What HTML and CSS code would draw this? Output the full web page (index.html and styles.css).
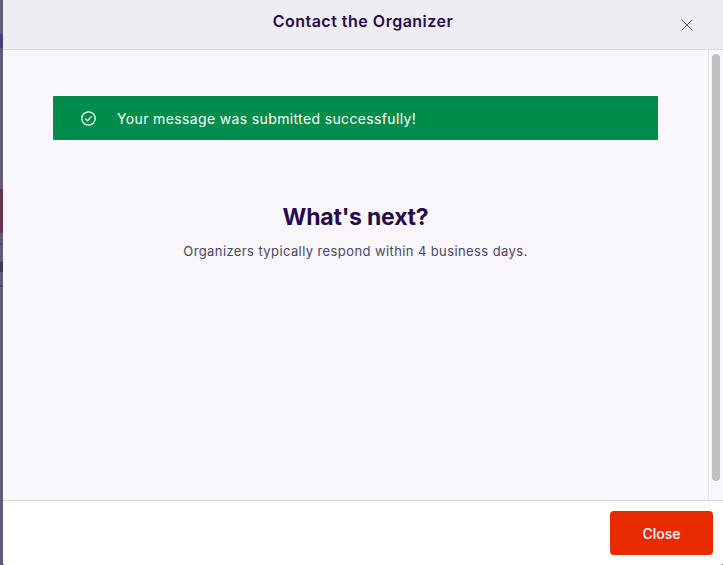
FILE: index.html
```html
<!DOCTYPE html>
<html lang="en">
<head>
<meta charset="utf-8">
<title>Contact the Organizer</title>
<link rel="stylesheet" href="styles.css">
</head>
<body>
<div class="backdrop">
  <span class="bd bd-a"></span>
  <span class="bd bd-b"></span>
  <span class="bd bd-c"></span>
  <span class="bd bd-d"></span>
  <span class="bd bd-e"></span>
</div>
<div class="modal">
  <header class="modal-header">
    <h1 class="modal-title">Contact the Organizer</h1>
    <button class="close-x" aria-label="Close">
      <svg width="12" height="12" viewBox="0 0 12 12"><path d="M.6.6l10.8 10.8M11.4.6L.6 11.4" fill="none" stroke="#585163" stroke-width="1"/></svg>
    </button>
  </header>
  <div class="modal-main">
    <div class="content">
      <div class="notice">
        <svg class="notice-icon" width="15" height="15" viewBox="0 0 15 15"><circle cx="7.5" cy="7.5" r="6.7" fill="none" stroke="#fff" stroke-width="1.3"/><path d="M4.4 7.8l2.1 2.1 4-4.5" fill="none" stroke="#fff" stroke-width="1.3"/></svg>
        <span class="notice-text">Your message was submitted successfully!</span>
      </div>
      <h2 class="next-title">What's next?</h2>
      <p class="next-text">Organizers typically respond within 4 business days.</p>
    </div>
    <div class="scroll-track"><div class="scroll-thumb"></div></div>
  </div>
  <footer class="modal-footer">
    <button class="close-btn">Close</button>
  </footer>
</div>
</body>
</html>
```
FILE: styles.css
```css
* { box-sizing: border-box; }
html, body { height: 100%; }
body {
  margin: 0;
  display: flex;
  height: 565px;
  overflow: hidden;
  background: #635a78;
  font-family: Inter, "Liberation Sans", sans-serif;
}
.backdrop { width: 3px; flex: none; position: relative; background: #635a78; }
.bd { position: absolute; left: 0; width: 3px; }
.bd-a { top: 34px; height: 14px; background: #4a3f86; }
.bd-b { top: 189px; height: 44px; background: #6e2f4e; }
.bd-c { top: 243px; height: 2px; background: #4d4463; }
.bd-d { top: 262px; height: 10px; background: #40375a; }
.bd-e { top: 285px; height: 2px; background: #4d4463; }
.modal {
  flex: 1;
  display: flex;
  flex-direction: column;
  background: #fff;
  border-bottom-left-radius: 3px;
  border-bottom-right-radius: 3px;
  overflow: hidden;
}
.modal-header {
  height: 50px;
  flex: none;
  display: flex;
  align-items: center;
  justify-content: center;
  position: relative;
  background: #eeedf2;
  border-bottom: 1px solid #dbdae3;
}
.modal-title {
  margin: 0 0 8px;
  font-size: 16px;
  font-weight: 600;
  line-height: 24px;
  letter-spacing: 0.5px;
  color: #280a4c;
}
.close-x {
  position: absolute;
  right: 30px;
  top: 19px;
  width: 12px;
  height: 12px;
  padding: 0;
  border: 0;
  background: none;
  display: block;
}
.close-x svg { display: block; }
.modal-main {
  flex: 1;
  min-height: 0;
  display: flex;
  background: #f9f7fb;
  border-bottom: 1px solid #dbdae3;
}
.content {
  flex: 1;
  padding: 46px 50px 0;
  text-align: center;
}
.notice {
  width: 605px;
  height: 44px;
  display: flex;
  align-items: center;
  padding-left: 28px;
  gap: 21px;
  background: #008c4a;
  color: #fff;
  border-radius: 1px;
}
.notice-icon { flex: none; }
.notice-text { margin-top: 2px; font-size: 14px; line-height: 20px; letter-spacing: 0.36px; }
.next-title {
  margin: 61px 0 0;
  width: 605px;
  font-size: 23px;
  line-height: 32px;
  font-weight: 700;
  letter-spacing: -0.2px;
  color: #280a4c;
}
.next-text {
  margin: 8px 0 0;
  width: 605px;
  font-size: 13px;
  line-height: 20px;
  letter-spacing: 0.4px;
  color: #4b4663;
}
.scroll-track {
  width: 15px;
  flex: none;
  padding: 4px 3px 4px 3px;
  background: #f9f7fb;
  border-left: 1px solid #e8e7ec;
}
.scroll-thumb { width: 8px; height: 427px; border-radius: 4px; background: #c1c1c1; }
.modal-footer {
  flex: none;
  height: 64px;
  display: flex;
  justify-content: flex-end;
  align-items: flex-start;
  padding: 10px 10px 0 0;
  background: #fff;
}
.close-btn {
  width: 103px;
  height: 44px;
  border: 0;
  border-radius: 4px;
  background: #e82a00;
  color: #fff;
  font-family: inherit;
  font-size: 14px;
  font-weight: 500;
}
```
